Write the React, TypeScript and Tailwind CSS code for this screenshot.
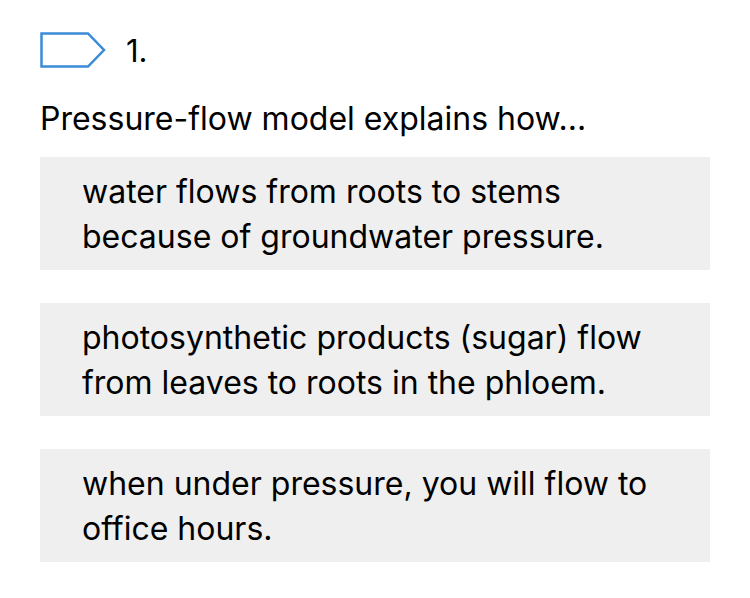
export default function App() {
  const options = [
    ["water flows from roots to stems", "because of groundwater pressure."],
    ["photosynthetic products (sugar) flow", "from leaves to roots in the phloem."],
    ["when under pressure, you will flow to", "office hours."],
  ];

  return (
    <div className="w-[750px] h-[598px] bg-white text-black px-10 pt-[30px] font-['Inter','Liberation_Sans',sans-serif]">
      {/* Question header */}
      <div className="flex items-center gap-5 h-[40px]">
        <svg width="66" height="38" viewBox="0 0 66 38" className="shrink-0">
          <path d="M1.5 2.5 H48 L64 19 L48 35.5 H1.5 Z" fill="none" stroke="#3b8bd6" strokeWidth="2.5" strokeLinejoin="miter" />
        </svg>
        <span className="text-[31px] leading-none">1.</span>
      </div>

      <p className="mt-[29px] text-[32px] leading-[40px]">Pressure-flow model explains how...</p>

      <div className="mt-[18px] flex flex-col gap-[33px]">
        {options.map((lines, i) => (
          <div key={i} className="bg-[#efefef] h-[113px] pl-[42px] flex flex-col justify-center">
            {lines.map((l, j) => (
              <div key={j} className="text-[32px] leading-[45px]">{l}</div>
            ))}
          </div>
        ))}
      </div>
    </div>
  );
}
